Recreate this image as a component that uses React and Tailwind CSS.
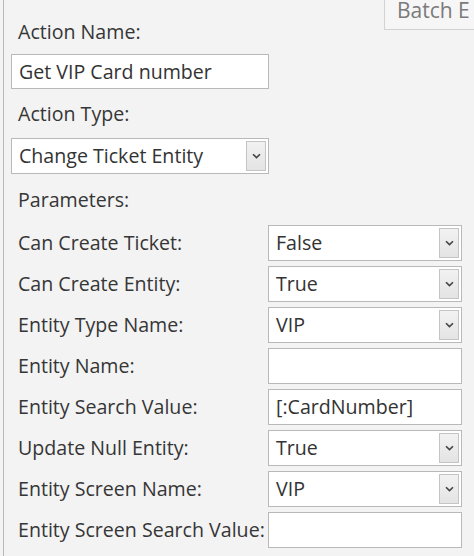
const params = [
  { label: 'Can Create Ticket:', value: 'False', select: true },
  { label: 'Can Create Entity:', value: 'True', select: true },
  { label: 'Entity Type Name:', value: 'VIP', select: true },
  { label: 'Entity Name:', value: '', select: false },
  { label: 'Entity Search Value:', value: '[:CardNumber]', select: false },
  { label: 'Update Null Entity:', value: 'True', select: true },
  { label: 'Entity Screen Name:', value: 'VIP', select: true },
  { label: 'Entity Screen Search Value:', value: '', select: false },
]

function Chevron() {
  return (
    <svg width="9" height="6" viewBox="0 0 9 6" fill="none">
      <path d="M1 1.2 L4.5 4.6 L8 1.2" stroke="#444" strokeWidth="1.6" />
    </svg>
  )
}

function Field({ value, select, className }) {
  return (
    <div className={`flex items-stretch bg-white border border-[#b9b9b9] ${className}`}>
      <span className="flex-1 pl-[7px] flex items-center text-[#333] whitespace-nowrap overflow-hidden">{value}</span>
      {select && (
        <span className="my-[2px] mr-[2px] w-[20px] flex items-center justify-center border border-[#c4c4c4] bg-gradient-to-b from-[#f2f2f2] to-[#e4e4e4]">
          <Chevron />
        </span>
      )}
    </div>
  )
}

export default function App() {
  return (
    <div
      className="w-[474px] h-[556px] bg-[#f3f3f3] pl-[3px] overflow-hidden relative text-[19.6px] leading-none text-[#363636]"
      style={{ fontFamily: '"Open Sans", "Noto Sans", sans-serif' }}
    >
      <div className="absolute top-[-4px] left-[384px] w-[100px] h-[34px] bg-[#f6f6f6] border border-[#d2d2d2] pl-[12px] pt-[3px] text-[21px] text-[#7a7a7a] whitespace-nowrap">
        Batch E
      </div>

      <div className="h-full border-l border-[#b8b8b8] pl-[7px] pt-[22px]">
        <div className="pl-[7px] h-[20px] flex items-center">Action Name:</div>
        <Field value="Get VIP Card number" className="mt-[12px] w-[258px] h-[35px]" />
        <div className="pl-[7px] mt-[15px] h-[20px] flex items-center">Action Type:</div>
        <Field value="Change Ticket Entity" select className="mt-[14px] w-[258px] h-[36px]" />
        <div className="pl-[7px] mt-[16px] h-[20px] flex items-center">Parameters:</div>

        <div className="mt-[15px] flex flex-col gap-[5px]">
          {params.map((p) => (
            <div key={p.label} className="flex items-center h-[36px]">
              <div className="w-[257px] pl-[7px] whitespace-nowrap">{p.label}</div>
              <Field value={p.value} select={p.select} className="w-[194px] h-[36px]" />
            </div>
          ))}
        </div>
      </div>
    </div>
  )
}
